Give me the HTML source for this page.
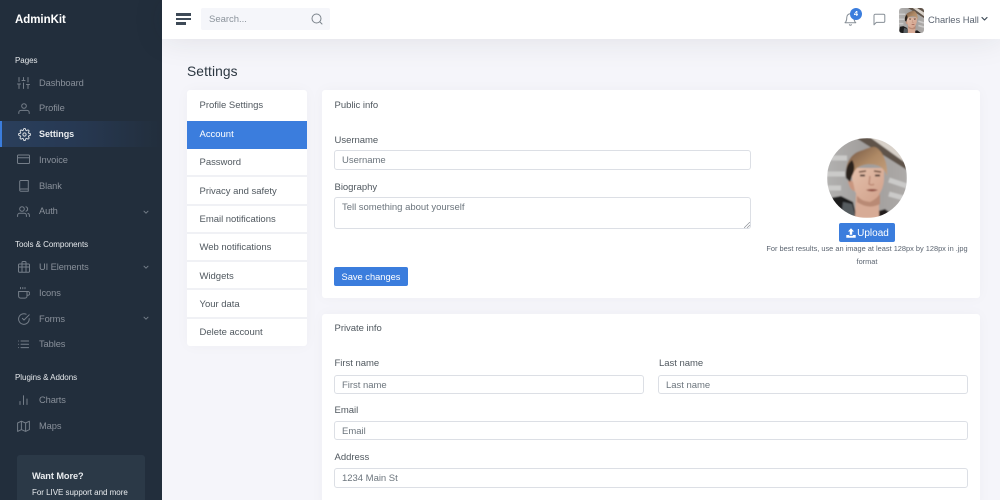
<!DOCTYPE html>
<html lang="en">
<head>
<meta charset="utf-8">
<title>Settings</title>
<style>
*{box-sizing:border-box}
html,body{margin:0;padding:0;width:1000px;height:500px;overflow:hidden}
#wrap{position:relative;width:1000px;height:500px;overflow:hidden;background:#f5f5fa;font-family:"Liberation Sans",sans-serif;font-size:9.5px;color:#50585f}
.t{position:absolute;line-height:14px;height:14px;margin-top:1px;white-space:nowrap;letter-spacing:-.02px}
.abs{position:absolute}
#side{position:absolute;left:0;top:0;width:162px;height:500px;background:#222e3c;overflow:hidden}
#side .t{margin-top:0}
#side .n{color:#89909a;left:39px;font-size:9.3px;letter-spacing:-.09px}
#side .h{color:#e6e9ec;left:15px;font-size:8px;letter-spacing:-.04px;margin-top:1px}
#side svg{position:absolute;fill:none;stroke:#757e89;stroke-width:1;stroke-linecap:round;stroke-linejoin:round}
.card{position:absolute;background:#fff;border-radius:3px;box-shadow:0 0 14px 0 rgba(33,37,41,.03)}
.inp{position:absolute;background:#fff;border:1px solid #dcdfe5;border-radius:3px;color:#6c757d;padding-left:7px;padding-top:1px;font-size:9.5px;letter-spacing:-.02px;white-space:nowrap}
.btn{position:absolute;background:#3b7ddd;border-radius:2px;color:#fff;text-align:center;white-space:nowrap;letter-spacing:0}
.div{position:absolute;left:0;width:120px;height:2px;background:#f0f1f5}
</style>
</head>
<body>
<div id="wrap">

<svg width="0" height="0" style="position:absolute">
  <defs>
    <filter id="soft" x="0" y="0" width="1" height="1"><feGaussianBlur stdDeviation=".8"/></filter>
    <linearGradient id="bg" x1="0" y1="0" x2="1" y2="0"><stop offset="0" stop-color="#b2b1b0"/><stop offset=".5" stop-color="#a09d9b"/><stop offset="1" stop-color="#adaaa8"/></linearGradient>
    <linearGradient id="skin" x1="0" y1="0" x2="1" y2="1"><stop offset="0" stop-color="#e4c0ab"/><stop offset="1" stop-color="#d0a08a"/></linearGradient>
    <linearGradient id="hair" x1="0" y1="0" x2="1" y2="1"><stop offset="0" stop-color="#6e5240"/><stop offset=".5" stop-color="#ae8965"/><stop offset="1" stop-color="#c9a482"/></linearGradient>
    <g id="face">
      <g filter="url(#soft)">
      <rect width="80" height="80" fill="url(#bg)"/>
      <path d="M0 20h20M0 36h18M0 50h14M62 42l18 6M62 56l18 5" stroke="#cbcac9" stroke-width="5" fill="none"/>
      <path d="M29 0L80 32V0z" fill="#5f5348"/>
      <path d="M44 0L80 26V14L58 0z" fill="#d8d1c9"/>
      <path d="M3 60L14 58 26 64 30 80H0z" fill="#1c1b1d"/>
      <path d="M48 74L58 71 70 80H46z" fill="#201e1f"/>
      <path d="M16 64l9 2 4 14H14z" fill="#565b5f"/>
      <path d="M29 54L28 80H52L52 56z" fill="#d7ab96"/>
      <path d="M30 58Q42 70 53 56V66Q42 72 30 64z" fill="#b98a74"/>
      <path d="M24 30H57V40C57 50 52 60 43 64 35 63 28 57 26 48z" fill="url(#skin)"/>
      <path d="M21 43Q24 41 26 44L28 53Q23 53 21 43z" fill="#c9967f"/>
      <path d="M19 38C18 25 24 16 33 13 40 11 46 7 50 10 57 15 61 27 60 38 58 33 56 30 52 28 44 25 36 26 30 30 27 33 25 38 22 42z" fill="url(#hair)"/>
      <path d="M19 40C18 32 20 26 25 22 28 26 28 33 25 38L23 44z" fill="#2b211c"/>
      <path d="M32 34l7-1M47 33l7 1" stroke="#6b4c3a" stroke-width="1.500" fill="none"/>
      <path d="M33 37.500h5M48 37.500h5" stroke="#3d2c26" stroke-width="1.800" fill="none"/>
      <path d="M43 38L42 46Q45 48 47 46" stroke="#b98570" stroke-width="1.300" fill="none"/>
      <path d="M39 52Q45 50 51 52Q45 55 39 52z" fill="#8f4f42"/>
      </g>
    </g>
  </defs>
</svg>

<div id="side">
  <div class="t" style="left:15px;top:13px;color:#fff;font-size:11.500px;font-weight:bold;letter-spacing:-.04px">AdminKit</div>

  <div class="t h" style="top:53px">Pages</div>
  <div class="t n" style="top:75.500px">Dashboard</div>
  <svg style="left:17px;top:77px" width="13" height="12" viewBox="0 0 13 12"><path d="M2 11.500V7M2 4.500V.5M6.500 11.500V6M6.500 3V.5M11 11.500V8M11 5V.5M.5 7h3M5 3.500h3M9.500 7.500h3"/></svg>
  <div class="t n" style="top:101px">Profile</div>
  <svg style="left:18px;top:103px" width="12" height="11" viewBox="0 0 12 11"><circle cx="6" cy="3" r="2.300"/><path d="M.8 10.500V9.600c0-1.300 1-2.200 2.200-2.200h6c1.200 0 2.200.9 2.200 2.200v.9"/></svg>

  <div class="abs" style="left:0;top:121px;width:162px;height:26px;background:linear-gradient(90deg,#2a3f5c 0%,#273953 45%,#222e3c 100%);border-left:2px solid #3b7ddd"></div>
  <div class="t" style="left:39px;top:127px;color:#e9ecef;font-weight:bold;font-size:9px;letter-spacing:-.05px">Settings</div>
  <svg style="left:17.500px;top:128px;stroke:#d5d9de;stroke-width:1.900" width="13" height="13" viewBox="0 0 24 24"><circle cx="12" cy="12" r="3"/><path d="M19.400 15a1.650 1.650 0 0 0 .33 1.820l.06.06a2 2 0 1 1-2.830 2.830l-.06-.06a1.650 1.650 0 0 0-2.820 1.170V21a2 2 0 1 1-4 0v-.09A1.650 1.650 0 0 0 7.260 19.700l-.06.06a2 2 0 1 1-2.830-2.830l.06-.06A1.650 1.650 0 0 0 3.260 14H3a2 2 0 1 1 0-4h.09A1.650 1.650 0 0 0 4.600 7.260l-.06-.06a2 2 0 1 1 2.830-2.830l.06.06A1.650 1.650 0 0 0 10 3.260V3a2 2 0 1 1 4 0v.09a1.650 1.650 0 0 0 2.820 1.170l.06-.06a2 2 0 1 1 2.830 2.830l-.06.06A1.650 1.650 0 0 0 20.740 10H21a2 2 0 1 1 0 4h-.09a1.650 1.650 0 0 0-1.510 1z"/></svg>

  <div class="t n" style="top:153px">Invoice</div>
  <svg style="left:17px;top:154px" width="13" height="11" viewBox="0 0 13 11"><rect x=".5" y="1" width="12" height="8.500" rx="1"/><path d="M.5 3.700h12"/></svg>
  <div class="t n" style="top:178.500px">Blank</div>
  <svg style="left:19px;top:180px" width="10" height="12" viewBox="0 0 10 12"><path d="M.7 9.600V1.500a1 1 0 0 1 1-1h7.600v10.800H1.900A1.200 1.200 0 0 1 .7 10.100c0-.7.5-1.100 1.200-1.100h7.400"/></svg>
  <div class="t n" style="top:204px">Auth</div>
  <svg style="left:17px;top:206px" width="13" height="11" viewBox="0 0 13 11"><circle cx="5" cy="3" r="2.300"/><path d="M.6 10.500V9.400c0-1.200 1-2.100 2.100-2.100h4.600c1.200 0 2.100.9 2.100 2.100v1.100M9 .8a2.300 2.300 0 0 1 0 4.400M12.400 10.500V9.400c0-1-.7-1.800-1.500-2"/></svg>
  <svg style="left:143px;top:210px" width="6" height="5" viewBox="0 0 6 5"><path d="M1 1.200l2 2 2-2"/></svg>

  <div class="t h" style="top:237px">Tools &amp; Components</div>
  <div class="t n" style="top:260px">UI Elements</div>
  <svg style="left:18px;top:261px" width="12" height="12" viewBox="0 0 12 12"><rect x=".5" y="3" width="11" height="8.300" rx="1"/><path d="M4 11V1.500a1 1 0 0 1 1-1h2a1 1 0 0 1 1 1V11M.5 6h11"/></svg>
  <svg style="left:143px;top:265px" width="6" height="5" viewBox="0 0 6 5"><path d="M1 1.200l2 2 2-2"/></svg>
  <div class="t n" style="top:286px">Icons</div>
  <svg style="left:18px;top:287px" width="12" height="12" viewBox="0 0 12 12"><path d="M9 4.500h.8a1.900 1.900 0 0 1 0 3.800H9M.6 4.500H9v4.600a2 2 0 0 1-2 2H2.600a2 2 0 0 1-2-2zM2.500.5v1.300M4.800.5v1.300M7 .5v1.300"/></svg>
  <div class="t n" style="top:311.500px">Forms</div>
  <svg style="left:18px;top:313px" width="12" height="12" viewBox="0 0 12 12"><path d="M11.200 5.600V6A5.300 5.300 0 1 1 8.100 1.200M11.200 1.800L6 7 4.400 5.400"/></svg>
  <svg style="left:143px;top:316px" width="6" height="5" viewBox="0 0 6 5"><path d="M1 1.200l2 2 2-2"/></svg>
  <div class="t n" style="top:337px">Tables</div>
  <svg style="left:18px;top:340px" width="11" height="9" viewBox="0 0 11 9"><path d="M3 1h7.600M3 4.300h7.600M3 7.600h7.600M.5 1h.1M.5 4.300h.1M.5 7.600h.1"/></svg>

  <div class="t h" style="top:370px">Plugins &amp; Addons</div>
  <div class="t n" style="top:392.500px">Charts</div>
  <svg style="left:19px;top:395px" width="9" height="10" viewBox="0 0 9 10"><path d="M1 9.500V6.500M4.500 9.500V.8M8 9.500V4"/></svg>
  <div class="t n" style="top:418.500px">Maps</div>
  <svg style="left:17px;top:420px" width="13" height="12" viewBox="0 0 13 12"><path d="M.6 3v8.400l3.800-1.800 4.200 1.800 3.800-1.800V1.200L8.600 3 4.400 1.200zM4.400 1.200v8.400M8.600 3v8.400"/></svg>

  <div class="abs" style="left:17px;top:455px;width:128px;height:60px;background:#2b3947;border-radius:3px"></div>
  <div class="t" style="left:32px;top:469px;color:#e9ecef;font-weight:bold;font-size:9.200px;letter-spacing:-.07px">Want More?</div>
  <div class="t" style="left:32px;top:486px;color:#e9ecef;font-size:8px;letter-spacing:-.03px">For LIVE support and more</div>
</div>

<!-- top bar -->
<div class="abs" style="left:162px;top:0;width:838px;height:39px;background:#fff;box-shadow:0 0 32px 0 rgba(33,37,41,.1)"></div>
<div class="abs" style="left:176px;top:13px;width:15px;height:2.800px;background:#3e4a57"></div>
<div class="abs" style="left:176px;top:17.500px;width:15px;height:2.800px;background:#3e4a57"></div>
<div class="abs" style="left:176px;top:22px;width:10px;height:2.800px;background:#3e4a57"></div>
<div class="abs" style="left:201px;top:8px;width:129px;height:22px;background:#f5f6fa;border-radius:2px"></div>
<div class="t" style="left:209px;top:12px;color:#8b939b">Search...</div>
<svg class="abs" style="left:311px;top:13px" width="12" height="12" viewBox="0 0 12 12" fill="none" stroke="#7b838b" stroke-width="1" stroke-linecap="round"><circle cx="5.500" cy="5.500" r="4.500"/><path d="M11 11L8.700 8.700"/></svg>

<svg class="abs" style="left:844px;top:13px" width="13" height="13" viewBox="0 0 13 13" fill="none" stroke="#868e96" stroke-width="1" stroke-linecap="round" stroke-linejoin="round"><path d="M10 4.300a3.600 3.600 0 0 0-7.200 0c0 4.200-1.800 5.400-1.800 5.400h10.800s-1.800-1.200-1.800-5.400M7.400 11.700a1.200 1.200 0 0 1-2 0"/></svg>
<div class="abs" style="left:850px;top:8px;width:12px;height:12px;border-radius:50%;background:#3b7ddd;color:#fff;font-size:7.500px;font-weight:bold;line-height:12px;text-align:center">4</div>
<svg class="abs" style="left:873px;top:13px" width="13" height="13" viewBox="0 0 13 13" fill="none" stroke="#868e96" stroke-width="1" stroke-linecap="round" stroke-linejoin="round"><path d="M11.800 8.100a1.300 1.300 0 0 1-1.300 1.300H3.300L1 11.800V2.500a1.300 1.300 0 0 1 1.300-1.300h8.200a1.300 1.300 0 0 1 1.300 1.300z"/></svg>

<svg class="abs" style="left:899px;top:8px;border-radius:3px" width="25" height="25" viewBox="0 0 80 80"><use href="#face"/></svg>
<div class="t" style="left:928px;top:12px;color:#5b6470;font-size:9.400px;letter-spacing:-.02px">Charles Hall</div>
<svg class="abs" style="left:981px;top:16px" width="7" height="6" viewBox="0 0 7 6" fill="none" stroke="#3e4a57" stroke-width="1.200" stroke-linecap="round" stroke-linejoin="round"><path d="M1 1.500l2.500 2.500L6 1.500"/></svg>

<!-- title -->
<div class="t" style="left:187px;top:61px;height:20px;line-height:20px;font-size:13.800px;color:#2b3640;letter-spacing:.1px">Settings</div>

<!-- list -->
<div class="card" style="left:187px;top:90px;width:120px;height:256px;overflow:hidden">
  <div class="abs" style="left:0;top:31px;width:120px;height:28px;background:#3b7ddd"></div>
  <div class="div" style="top:85px"></div>
  <div class="div" style="top:113.500px"></div>
  <div class="div" style="top:141.500px"></div>
  <div class="div" style="top:170px"></div>
  <div class="div" style="top:198px"></div>
  <div class="div" style="top:226.500px"></div>
</div>
<div class="t" style="left:199.500px;top:97.500px">Profile Settings</div>
<div class="t" style="left:199.500px;top:127px;color:#fff">Account</div>
<div class="t" style="left:199.500px;top:155px">Password</div>
<div class="t" style="left:199.500px;top:184px">Privacy and safety</div>
<div class="t" style="left:199.500px;top:212px">Email notifications</div>
<div class="t" style="left:199.500px;top:240px">Web notifications</div>
<div class="t" style="left:199.500px;top:268.500px">Widgets</div>
<div class="t" style="left:199.500px;top:296.500px">Your data</div>
<div class="t" style="left:199.500px;top:324.500px">Delete account</div>

<!-- public info -->
<div class="card" style="left:322px;top:90px;width:658px;height:208px"></div>
<div class="t" style="left:334.500px;top:97.500px">Public info</div>
<div class="t" style="left:334.500px;top:132.500px">Username</div>
<div class="inp" style="left:334px;top:150px;width:417px;height:20px;line-height:18px">Username</div>
<div class="t" style="left:334.500px;top:179.500px">Biography</div>
<div class="inp" style="left:334px;top:197px;width:417px;height:32px;line-height:18px">Tell something about yourself</div>
<svg class="abs" style="left:744px;top:222px" width="6" height="6" viewBox="0 0 6 6" stroke="#8a8f96" stroke-width=".7"><path d="M0 6L6 0M3 6L6 3"/></svg>
<div class="btn" style="left:334px;top:267px;width:74px;height:19px;line-height:21px;font-size:9.300px">Save changes</div>

<svg class="abs" style="left:827px;top:138px;border-radius:50%" width="80" height="80" viewBox="0 0 80 80"><use href="#face"/></svg>
<div class="btn" style="left:839px;top:223px;width:56px;height:19px;line-height:21px;font-size:10px;padding-left:12px">Upload</div>
<svg class="abs" style="left:846px;top:227.500px" width="10" height="10" viewBox="0 0 10 10" fill="#fff"><path d="M5 .3L8 3.500H6.200V6.800H3.800V3.500H2z"/><path d="M.3 7h2.800v.8h3.800V7h2.800v2.700H.3z"/></svg>
<div class="t" style="left:747px;top:240.500px;width:240px;text-align:center;font-size:7.400px;letter-spacing:0;color:#5b6470">For best results, use an image at least 128px by 128px in .jpg</div>
<div class="t" style="left:747px;top:254px;width:240px;text-align:center;font-size:7.400px;letter-spacing:0;color:#5b6470">format</div>

<!-- private info -->
<div class="card" style="left:322px;top:314px;width:658px;height:200px"></div>
<div class="t" style="left:334.500px;top:321px">Private info</div>
<div class="t" style="left:334.500px;top:356px">First name</div>
<div class="inp" style="left:334px;top:375px;width:310px;height:19px;line-height:17px">First name</div>
<div class="t" style="left:659px;top:356px">Last name</div>
<div class="inp" style="left:658px;top:375px;width:310px;height:19px;line-height:17px">Last name</div>
<div class="t" style="left:334.500px;top:403px">Email</div>
<div class="inp" style="left:334px;top:421px;width:634px;height:19px;line-height:17px">Email</div>
<div class="t" style="left:334.500px;top:450px">Address</div>
<div class="inp" style="left:334px;top:468px;width:634px;height:20px;line-height:18px">1234 Main St</div>

</div>
</body>
</html>
